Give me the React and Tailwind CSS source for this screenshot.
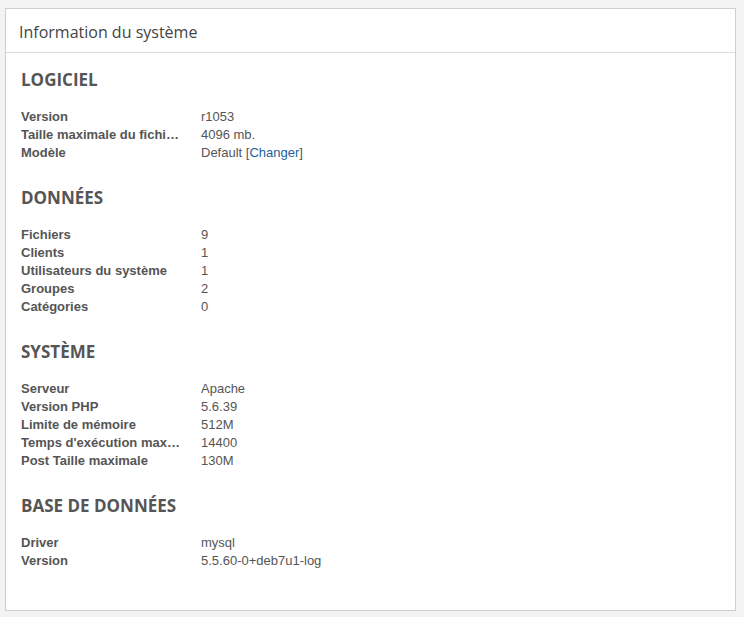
const sections = [
  {
    title: 'LOGICIEL',
    rows: [
      ['Version', 'r1053'],
      ['Taille maximale du fichier à téléverser', '4096 mb.'],
      ['Modèle', 'model'],
    ],
  },
  {
    title: 'DONNÉES',
    rows: [
      ['Fichiers', '9'],
      ['Clients', '1'],
      ['Utilisateurs du système', '1'],
      ['Groupes', '2'],
      ['Catégories', '0'],
    ],
  },
  {
    title: 'SYSTÈME',
    rows: [
      ['Serveur', 'Apache'],
      ['Version PHP', '5.6.39'],
      ['Limite de mémoire', '512M'],
      ["Temps d'exécution maximal", '14400'],
      ['Post Taille maximale', '130M'],
    ],
  },
  {
    title: 'BASE DE DONNÉES',
    rows: [
      ['Driver', 'mysql'],
      ['Version', '5.5.60-0+deb7u1-log'],
    ],
  },
]

export default function App() {
  return (
    <div className="min-h-screen bg-[#f3f3f3] pt-2 pl-[5px] pr-2">
      <div className="w-[731px] h-[603px] bg-white border border-[#cfcfcf]">
        <div className="h-[44px] flex items-center px-[13px] pt-[2px] border-b border-[#dcdcdc]">
          <h1 className="text-[16px] text-[#444] font-['Open_Sans',sans-serif]">Information du système</h1>
        </div>
        <div className="px-[15px] pt-[17px]">
          {sections.map((s, i) => (
            <div key={s.title} className={i > 0 ? 'mt-[26px]' : ''}>
              <h2 className="text-[17px] leading-[20px] font-bold text-[#555] font-['Open_Sans',sans-serif]">
                {s.title}
              </h2>
              <div className="mt-[18px] font-['Liberation_Sans',Arial,sans-serif] text-[13px] leading-[18px] text-[#555]">
                {s.rows.map(([label, value]) => (
                  <div key={label + value} className="flex">
                    <div className="w-[180px] pr-[20px] font-bold truncate shrink-0">{label}</div>
                    <div>
                      {value === 'model' ? (
                        <span>
                          Default [<a className="text-[#1b5f9c]">Changer</a>]
                        </span>
                      ) : (
                        value
                      )}
                    </div>
                  </div>
                ))}
              </div>
            </div>
          ))}
        </div>
      </div>
    </div>
  )
}
